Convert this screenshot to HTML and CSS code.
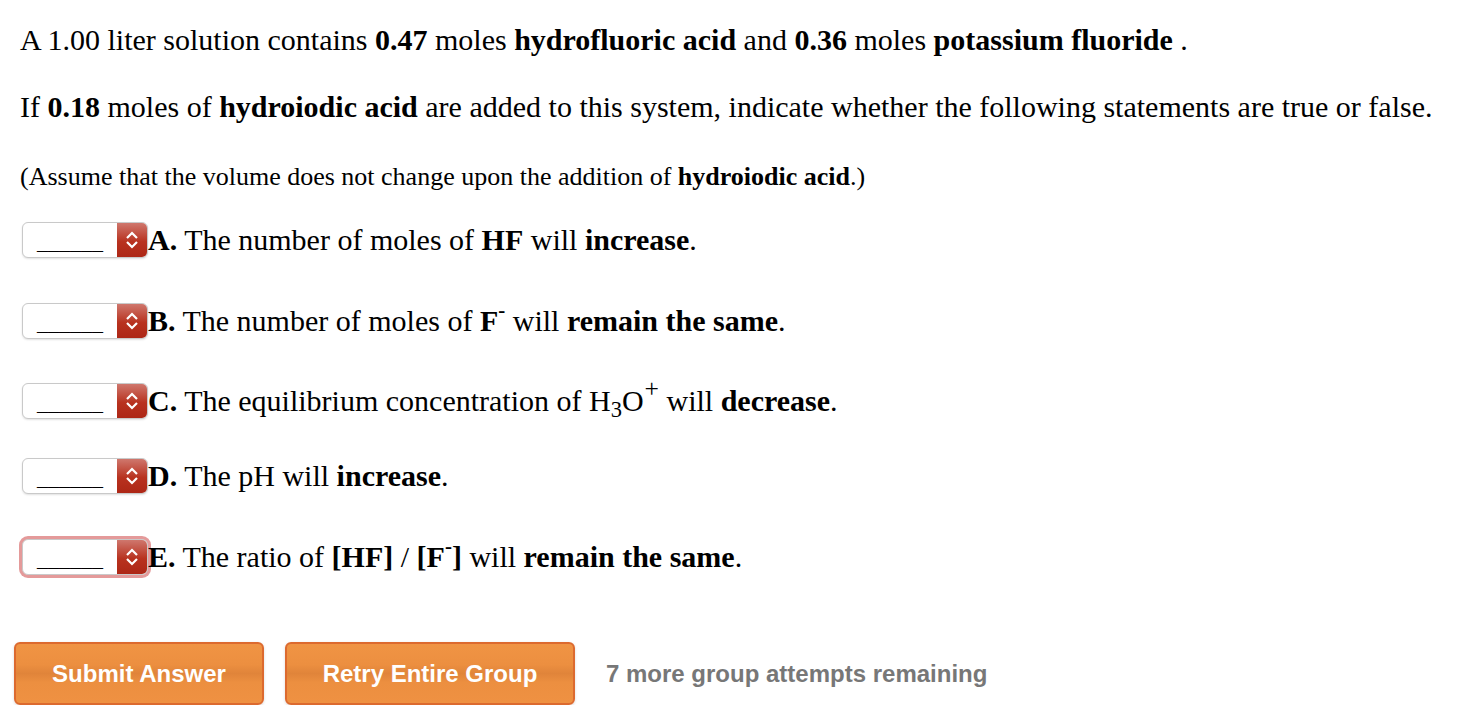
FILE: index.html
```html
<!DOCTYPE html>
<html lang="en">
<head>
    <meta charset="UTF-8">
    <title>Buffer Question</title>
    <link rel="stylesheet" href="styles.css">
</head>
<body>
    <div class="question">
        <p class="lead">A 1.00 liter solution contains <b>0.47</b> moles <b>hydrofluoric acid</b> and <b>0.36</b> moles <b>potassium fluoride</b> .</p>
        <p class="lead">If <b>0.18</b> moles of <b>hydroiodic acid</b> are added to this system, indicate whether the following statements are true or false.</p>
        <p class="note">(Assume that the volume does not change upon the addition of <b>hydroiodic acid</b>.)</p>

        <div class="statement row-a">
            <span class="picker"><span class="blank">______</span><span class="arrows"><svg width="14" height="20" viewBox="0 0 14 20"><path d="M2 8 L7 3 L12 8 M2 12 L7 17 L12 12" fill="none" stroke="#fff" stroke-width="2.2"/></svg></span></span>
            <span class="text"><b>A.</b> The number of moles of <b>HF</b> will <b>increase</b>.</span>
        </div>
        <div class="statement row-b">
            <span class="picker"><span class="blank">______</span><span class="arrows"><svg width="14" height="20" viewBox="0 0 14 20"><path d="M2 8 L7 3 L12 8 M2 12 L7 17 L12 12" fill="none" stroke="#fff" stroke-width="2.2"/></svg></span></span>
            <span class="text"><b>B.</b> The number of moles of <b>F<sup>-</sup></b> will <b>remain the same</b>.</span>
        </div>
        <div class="statement row-c">
            <span class="picker"><span class="blank">______</span><span class="arrows"><svg width="14" height="20" viewBox="0 0 14 20"><path d="M2 8 L7 3 L12 8 M2 12 L7 17 L12 12" fill="none" stroke="#fff" stroke-width="2.2"/></svg></span></span>
            <span class="text"><b>C.</b> The equilibrium concentration of H<sub>3</sub>O<sup class="plus">+</sup> will <b>decrease</b>.</span>
        </div>
        <div class="statement row-d">
            <span class="picker"><span class="blank">______</span><span class="arrows"><svg width="14" height="20" viewBox="0 0 14 20"><path d="M2 8 L7 3 L12 8 M2 12 L7 17 L12 12" fill="none" stroke="#fff" stroke-width="2.2"/></svg></span></span>
            <span class="text"><b>D.</b> The pH will <b>increase</b>.</span>
        </div>
        <div class="statement row-e">
            <span class="picker focused"><span class="blank">______</span><span class="arrows"><svg width="14" height="20" viewBox="0 0 14 20"><path d="M2 8 L7 3 L12 8 M2 12 L7 17 L12 12" fill="none" stroke="#fff" stroke-width="2.2"/></svg></span></span>
            <span class="text"><b>E.</b> The ratio of <b>[HF]</b> / <b>[F<sup>-</sup>]</b> will <b>remain the same</b>.</span>
        </div>

        <div class="actions">
            <button class="btn">Submit Answer</button>
            <button class="btn">Retry Entire Group</button>
            <span class="attempts">7 more group attempts remaining</span>
        </div>
    </div>
</body>
</html>
```

FILE: styles.css
```css
body {
    margin: 0;
    padding: 0 20px;
    font-family: "Liberation Serif", "Times New Roman", serif;
    color: #000;
    background: #fff;
}
.question {
    padding-top: 22px;
}
.lead {
    font-size: 30px;
    margin: 0 0 31px;
    line-height: 36px;
}
.lead + .note {
    margin-top: 36px;
}
.note {
    font-size: 26px;
    margin: 0 0 29px;
    line-height: 32px;
}
.statement {
    display: flex;
    align-items: center;
    height: 36px;
    margin-left: 2px;
}
.row-a { margin-top: 0; }
.row-b { margin-top: 45px; }
.row-c { margin-top: 44px; }
.row-d { margin-top: 39px; }
.row-e { margin-top: 45px; }
.text {
    font-size: 30px;
    line-height: 36px;
}
sup {
    font-size: 70%;
    line-height: 0;
    vertical-align: 0.65em;
}
sup.plus {
    font-size: 85%;
    vertical-align: 0.55em;
    margin-left: 1px;
}
sub {
    font-size: 75%;
    line-height: 0;
    vertical-align: -0.25em;
}
.picker {
    display: flex;
    width: 126px;
    height: 36px;
    box-sizing: border-box;
    border: 1px solid #c9c9c9;
    border-radius: 6px;
    overflow: hidden;
    background: #fff;
    box-shadow: 0 1px 2px rgba(0, 0, 0, 0.12);
}
.picker.focused {
    box-shadow: 0 0 0 3px #e49a9a;
}
.blank {
    flex: 1;
    font-size: 22px;
    line-height: 34px;
    text-align: center;
    padding-top: 2px;
}
.arrows {
    width: 30px;
    display: flex;
    align-items: center;
    justify-content: center;
    background: linear-gradient(to bottom, #cf776d, #b8321f 55%, #ad2716);
}
.actions {
    display: flex;
    align-items: center;
    margin-top: 67px;
    margin-left: -6px;
}
.btn {
    width: 250px;
    height: 63px;
    margin-right: 21px;
    border: 2px solid #dc6a2f;
    border-radius: 6px;
    background: linear-gradient(to bottom, #f09444 0%, #ec8f40 35%, #e0843a 50%, #ec8f40 65%, #ef9142 100%);
    color: #fff;
    font-family: "Liberation Sans", Arial, sans-serif;
    font-size: 24px;
    font-weight: bold;
    box-shadow: 0 1px 3px rgba(0, 0, 0, 0.15);
    cursor: pointer;
}
.btn + .btn {
    width: 290px;
    margin-right: 31px;
}
.attempts {
    font-family: "Liberation Sans", Arial, sans-serif;
    font-size: 24px;
    font-weight: bold;
    color: #777;
}
```
